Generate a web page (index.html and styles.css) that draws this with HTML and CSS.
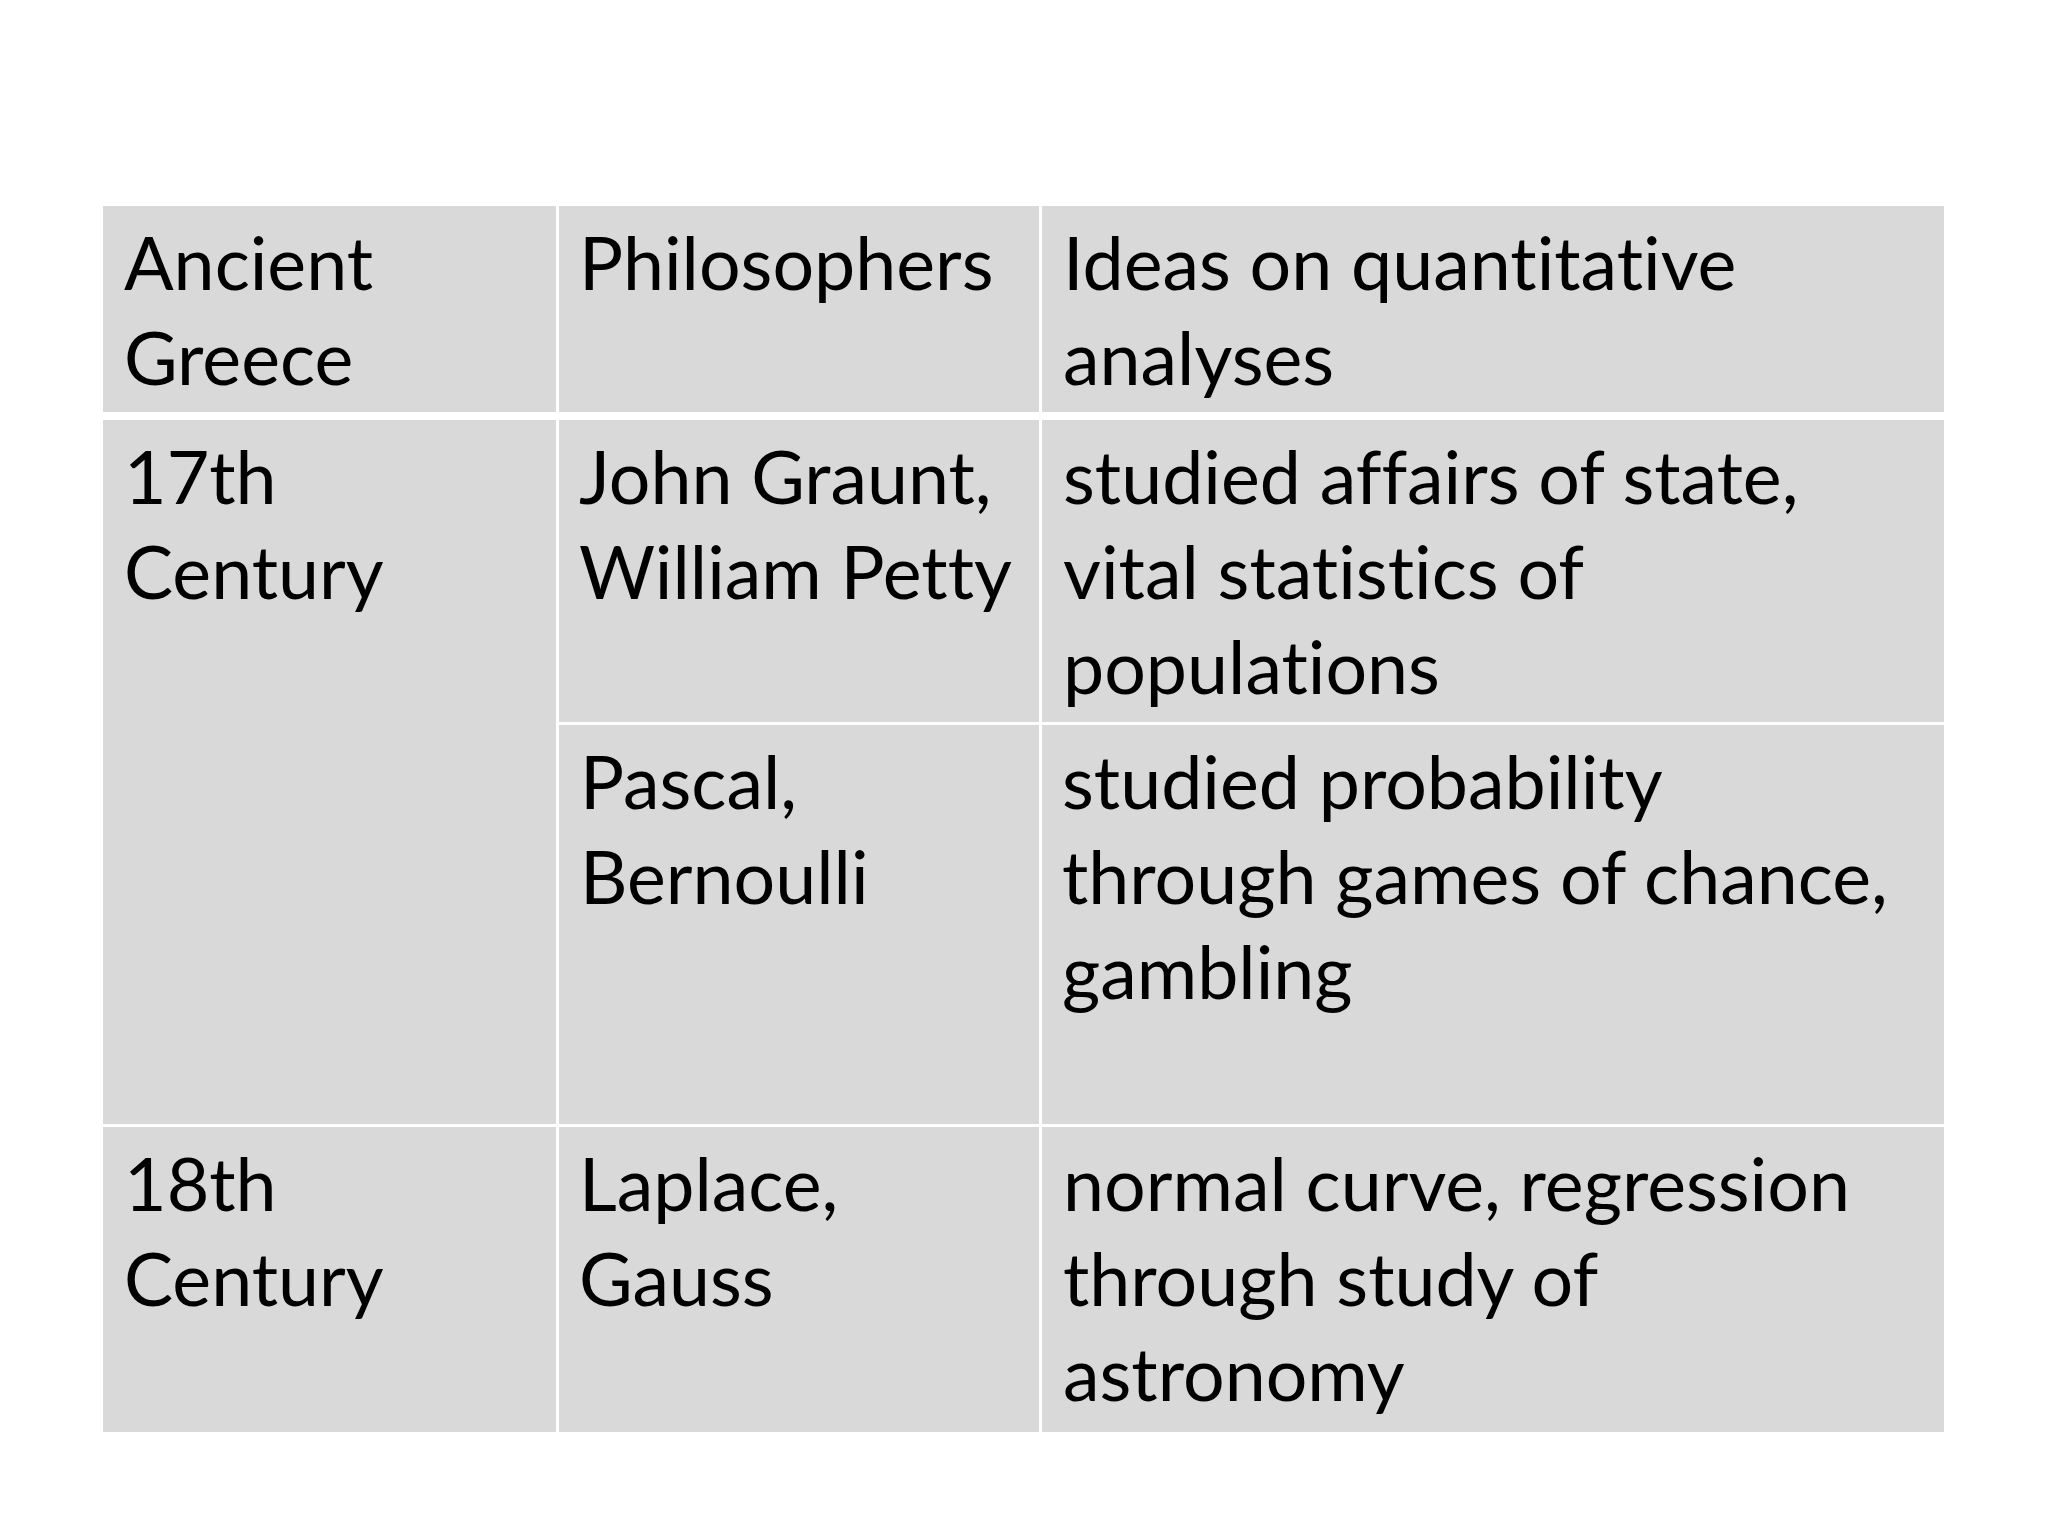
FILE: index.html
```html
<!DOCTYPE html>
<html>
<head>
<meta charset="utf-8">
<link rel="stylesheet" href="styles.css">
</head>
<body>
<table class="history">
  <colgroup>
    <col class="c1">
    <col class="c2">
    <col class="c3">
  </colgroup>
  <tr class="head">
    <th>Ancient<br>Greece</th>
    <th>Philosophers</th>
    <th>Ideas on quantitative<br>analyses</th>
  </tr>
  <tr class="r2">
    <td rowspan="2">17th<br>Century</td>
    <td>John Graunt,<br>William Petty</td>
    <td>studied affairs of state,<br>vital statistics of<br>populations</td>
  </tr>
  <tr class="r3">
    <td>Pascal,<br>Bernoulli</td>
    <td>studied probability<br>through games of chance,<br>gambling</td>
  </tr>
  <tr class="r4">
    <td>18th<br>Century</td>
    <td>Laplace,<br>Gauss</td>
    <td>normal curve, regression<br>through study of<br>astronomy</td>
  </tr>
</table>
</body>
</html>
```
FILE: styles.css
```css
html, body {
  margin: 0;
  padding: 0;
  background: #ffffff;
}
body {
  width: 2048px;
  height: 1536px;
  overflow: hidden;
}
.history {
  margin: 203px 0 0 100px;
  width: 1847px;
  table-layout: fixed;
  border-collapse: separate;
  border-spacing: 3px;
  font-family: Lato, "Open Sans", sans-serif;
  font-size: 73.5px;
  line-height: 95px;
  color: #000;
  font-variant-ligatures: none;
  font-feature-settings: "liga" 0, "clig" 0;
}
.c1 { width: 453px; }
.c2 { width: 480px; }
.c3 { width: 902px; }
.history th,
.history td {
  background: #d9d9d9;
  vertical-align: top;
  text-align: left;
  font-weight: normal;
  padding: 8px 10px 0 21px;
  white-space: nowrap;
}
.history th {
  border-bottom: 5px solid #fff;
}
.history tr > :nth-child(2) { padding-left: 20px; }
.head { height: 211px; }
.r2 { height: 302px; }
.r3 { height: 399px; }
.r4 { height: 305px; }
```
